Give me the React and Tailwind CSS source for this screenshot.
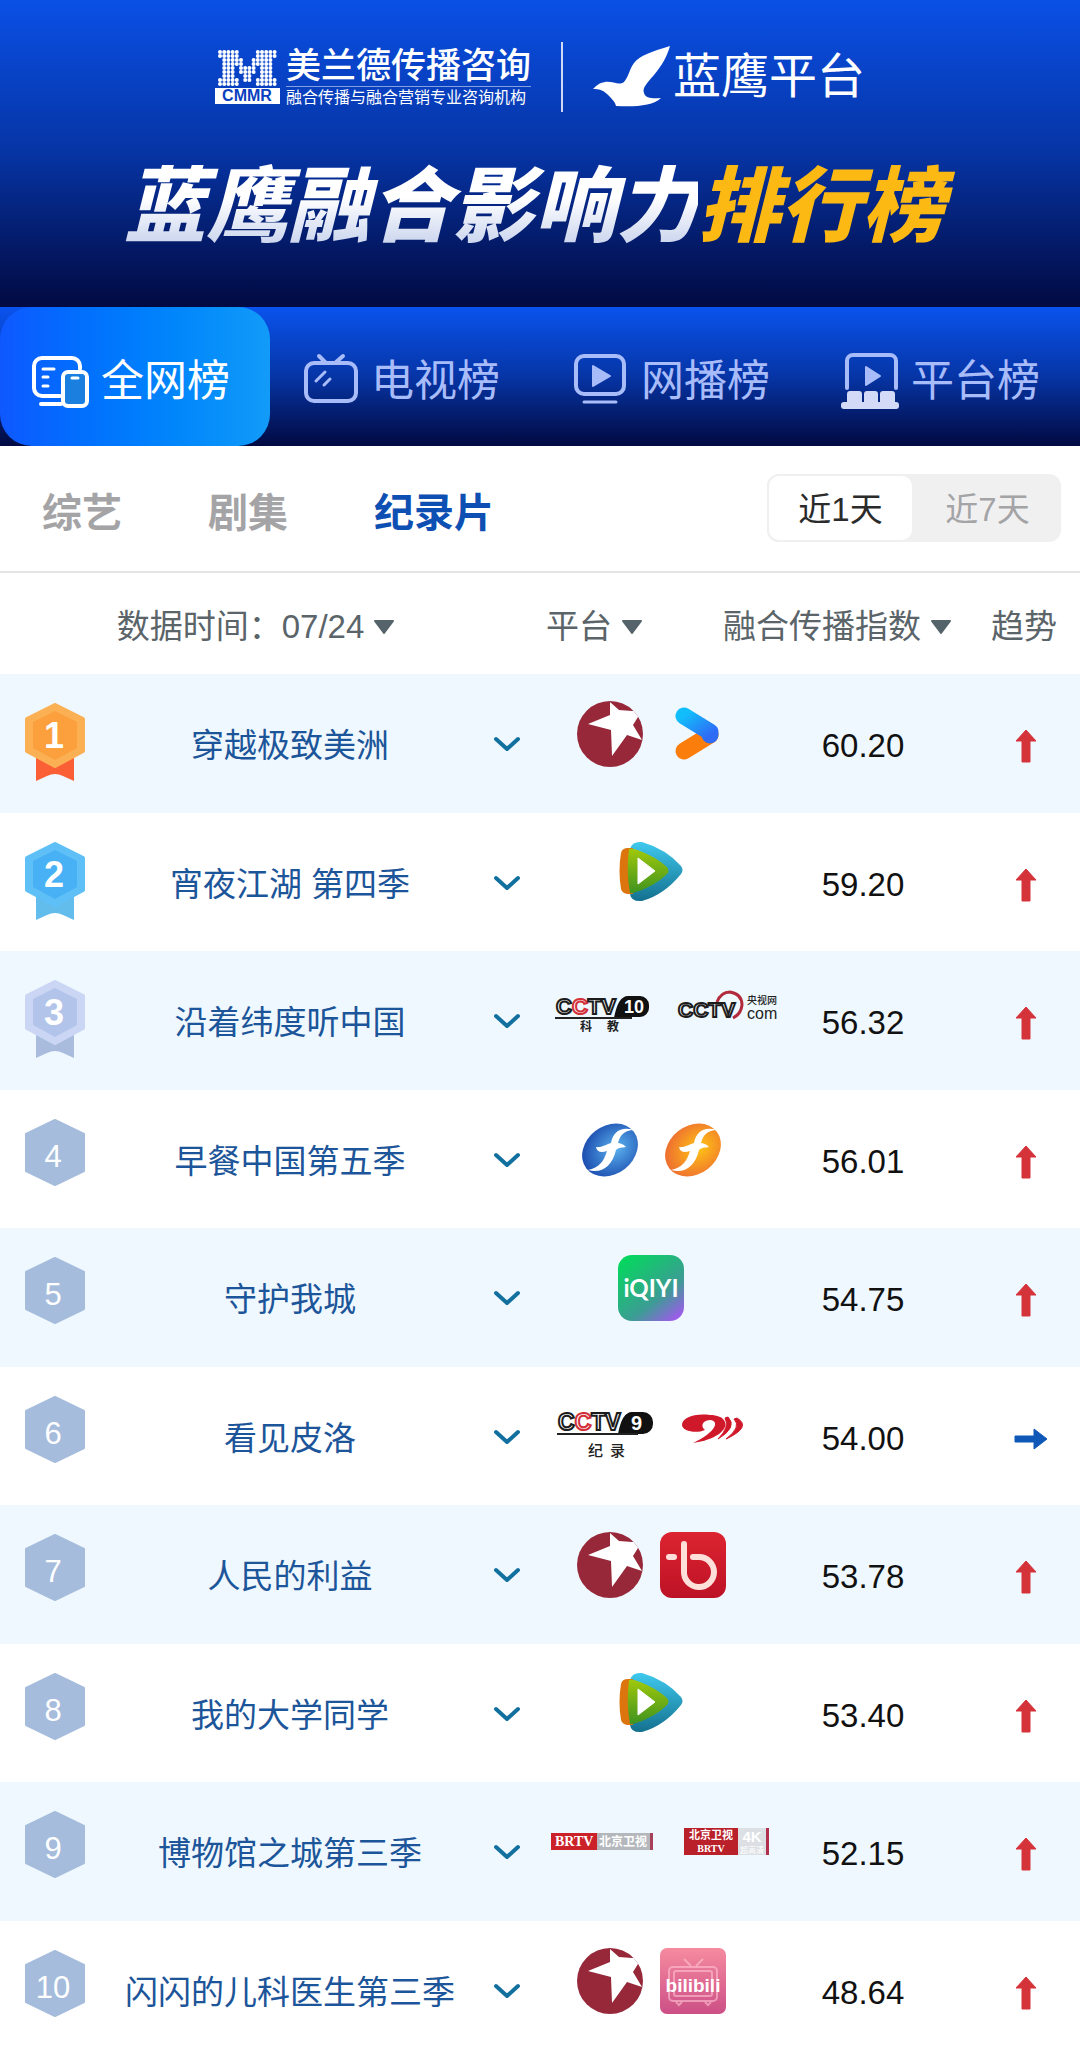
import { useState } from "react";

/* ===== DATA ===== */
const rankTabs = [
  { id: "all", label: "全网榜", icon: AllIcon },
  { id: "tv", label: "电视榜", icon: TvIcon },
  { id: "web", label: "网播榜", icon: WebIcon },
  { id: "platform", label: "平台榜", icon: PlatformIcon },
];

const categories = ["综艺", "剧集", "纪录片"];
const periods = ["近1天", "近7天"];

const rows = [
  { rank: 1, name: "穿越极致美洲", logos: [DragonStar, Youku], score: "60.20", trend: "up" },
  { rank: 2, name: "宵夜江湖 第四季", logos: [TencentVideo], score: "59.20", trend: "up" },
  { rank: 3, name: "沿着纬度听中国", logos: [Cctv10, CctvCom], wide: true, score: "56.32", trend: "up" },
  { rank: 4, name: "早餐中国第五季", logos: [BlueBird, OrangeBird], score: "56.01", trend: "up" },
  { rank: 5, name: "守护我城", logos: [Iqiyi], score: "54.75", trend: "up" },
  { rank: 6, name: "看见皮洛", logos: [Cctv9, NineLogo], wide: true, score: "54.00", trend: "flat" },
  { rank: 7, name: "人民的利益", logos: [DragonStar, BesTv], score: "53.78", trend: "up" },
  { rank: 8, name: "我的大学同学", logos: [TencentVideo], score: "53.40", trend: "up" },
  { rank: 9, name: "博物馆之城第三季", logos: [Brtv, Brtv4k], wide: true, score: "52.15", trend: "up" },
  { rank: 10, name: "闪闪的儿科医生第三季", logos: [DragonStar, Bilibili], score: "48.64", trend: "up" },
];

/* ===== TAB ICONS ===== */
function AllIcon() {
  return (
    <svg width="60" height="60" fill="none" stroke="currentColor" strokeWidth="4" strokeLinecap="round">
      <path d="M50 17v-3a8 8 0 0 0-8-8H12a8 8 0 0 0-8 8v22a8 8 0 0 0 8 8h18M11 52h20" />
      <rect x="33" y="20" width="24" height="34" rx="5" fill="#1b7fe0" />
      <path d="M13 17h11M13 25h5M13 34h5M42 26h6" strokeWidth="3" />
    </svg>
  );
}

function TvIcon() {
  return (
    <svg width="60" height="60" fill="none" stroke="currentColor" strokeWidth="4" strokeLinecap="round">
      <rect x="6" y="11" width="50" height="38" rx="8" />
      <path d="M19 4l7 7M43 4l-8 7" />
      <path d="M25 20l-9 9M30 27l-6 6" strokeWidth="3" />
    </svg>
  );
}

function WebIcon() {
  return (
    <svg width="60" height="60" fill="none" stroke="currentColor" strokeWidth="4" strokeLinecap="round">
      <rect x="6" y="4" width="48" height="38" rx="8" />
      <path d="M14 50h32" strokeWidth="3" />
      <path d="M23 14v20l17-10z" fill="currentColor" strokeWidth="2" strokeLinejoin="round" />
    </svg>
  );
}

function PlatformIcon() {
  return (
    <svg width="60" height="60" fill="none" stroke="currentColor" strokeWidth="4" strokeLinecap="round">
      <path d="M7 36V9a6 6 0 0 1 6-6h37a6 6 0 0 1 6 6v27" />
      <path d="M26 15v18l14-9z" fill="currentColor" strokeWidth="2" strokeLinejoin="round" />
      <g fill="#d3daf7" stroke="none">
        <rect x="7" y="39" width="15" height="16" rx="3" />
        <rect x="24" y="39" width="14" height="16" rx="3" />
        <rect x="40" y="39" width="15" height="16" rx="3" />
        <rect x="1" y="50" width="58" height="7" rx="3" />
      </g>
    </svg>
  );
}

/* ===== BRAND ===== */
const dots = [
  "#####....#####",
  "#####....#####",
  ".#####..#####.",
  ".#####..#####.",
  ".###.####.###.",
  ".###.####.###.",
  ".###..##..###.",
  "#####.##.#####",
  "#####....#####",
];

function CmmrMark() {
  return (
    <svg width="65" height="54" fill="#fff" className="shrink-0 overflow-visible">
      {dots.map((line, y) =>
        line.split("").map((c, x) =>
          c === "#" ? <circle key={`${x}-${y}`} cx={5 + x * 4.2} cy={2 + y * 4} r="2" /> : null
        )
      )}
      <rect y="38" width="65" height="16" />
      <text x="32" y="51" textAnchor="middle" fontSize="16" fontWeight="700" fill="#0a3fc0" className="font-['Liberation_Sans',sans-serif]">
        CMMR
      </text>
    </svg>
  );
}

function EagleMark() {
  return (
    <svg width="78" height="62" fill="#fff" className="shrink-0">
      <path d="M77 0C60 5 46 10 41 17C36 24 36 30 31 36C26 40 20 35 12 36C6 37 3 40 0 43C6 43 10 44 14 48C20 54 22 56 23 60C42 61 60 60 68 52C60 53 52 52 51 47C49 42 54 37 61 29C70 18 74 10 77 0Z" />
    </svg>
  );
}

/* ===== PLATFORM LOGOS ===== */
function DragonStar() {
  return (
    <svg width="66" height="66">
      <clipPath id="starClip">
        <circle cx="33" cy="33" r="33" />
      </clipPath>
      <circle cx="33" cy="33" r="33" fill="#96283a" />
      <path
        d="M33 1L42 9L55 10L66 8L56 24L65 39L50 34L35 55L34 29L11 23L33 14Z"
        fill="#fff"
        clipPath="url(#starClip)"
      />
    </svg>
  );
}

function Youku() {
  return (
    <svg width="66" height="66" fill="none" strokeWidth="17" strokeLinecap="round" strokeLinejoin="round">
      <linearGradient id="youkuBlue" x1="0" y1="0" x2="1" y2="1">
        <stop offset="0" stopColor="#12bdfb" />
        <stop offset="1" stopColor="#2f6cf6" />
      </linearGradient>
      <path d="M24 50L50 34" stroke="#fb7d0c" />
      <path d="M24 15L50 31L50 34" stroke="url(#youkuBlue)" />
    </svg>
  );
}

function TencentVideo() {
  return (
    <svg width="66" height="66">
      <linearGradient id="txBlue" x1="0" y1="0" x2="0" y2="1">
        <stop offset="0" stopColor="#3fc9ee" />
        <stop offset="1" stopColor="#14708f" />
      </linearGradient>
      <linearGradient id="txGreen" x1="0" y1="0" x2="0" y2="1">
        <stop offset="0" stopColor="#a0c80c" />
        <stop offset="1" stopColor="#3f931f" />
      </linearGradient>
      <path d="M12 9Q14 1 24 2Q48 9 63 26Q66 30 63 34Q46 55 24 61Q13 62 12 54Z" fill="url(#txBlue)" />
      <path d="M3 13Q4 8 10 8H15V54H9Q4 53 3 49Q0 31 3 13Z" fill="#dc750d" />
      <path d="M11 9Q15 8 22 11Q38 17 49 27Q52 31 49 34Q36 47 15 53H12Q8 31 11 9Z" fill="url(#txGreen)" />
      <path d="M20 18L37 31L20 44Z" fill="#fff" stroke="#fff" strokeLinejoin="round" />
    </svg>
  );
}

function CctvWord({ x, y, size = 22, accent = "#d3303a" }) {
  return (
    <text
      x={x}
      y={y}
      fontSize={size}
      fontWeight="700"
      fill="#fff"
      stroke="#1c1c1c"
      strokeWidth="2"
      className="font-['Liberation_Sans',sans-serif]"
    >
      C<tspan stroke={accent}>C</tspan>TV
    </text>
  );
}

function Cctv10() {
  return (
    <svg width="104" height="66" className="overflow-visible">
      <CctvWord x="8" y="36" />
      <path d="M7 40H66Q70 18 80 18H92A9 9 0 0 1 101 27V30A9 9 0 0 1 92 39H66" fill="#111" />
      <path d="M7 40H84" stroke="#222" strokeWidth="2" />
      <text x="76" y="35" fontSize="18" fontWeight="700" fill="#fff" className="font-['Liberation_Sans',sans-serif]">10</text>
      <g fontSize="12" fontWeight="700" fill="#222">
        <text x="32" y="53">科</text>
        <text x="59" y="53">教</text>
      </g>
    </svg>
  );
}

function CctvCom() {
  return (
    <svg width="104" height="66" className="overflow-visible">
      <path d="M45 24Q49 14 58 14Q70 16 70 27Q69 36 61 40" fill="none" stroke="#b32a3c" strokeWidth="3" />
      <CctvWord x="6" y="39" size={21} accent="#1c1c1c" />
      <text x="75" y="26" fontSize="10" fontWeight="500" fill="#222">央视网</text>
      <text x="75" y="41" fontSize="16" fill="#222" className="font-['Liberation_Sans',sans-serif]">com</text>
    </svg>
  );
}

function BirdLogo({ from, to, id }) {
  return (
    <svg width="66" height="66">
      <radialGradient id={id} cx="0.6" cy="0.55" r="0.6">
        <stop offset="0" stopColor={from} />
        <stop offset="1" stopColor={to} />
      </radialGradient>
      <ellipse cx="33" cy="33" rx="30" ry="24" transform="rotate(-38 33 33)" fill={`url(#${id})`} />
      <path
        d="M57 13C45 9 36 14 34 26C30 27 24 31 19 30C20 35 24 36 30 34C27 44 22 51 11 53C24 57 35 50 39 33C42 30 45 31 49 30C46 27 43 26 41 26C43 18 48 13 57 13Z"
        fill="#fff"
      />
    </svg>
  );
}

function BlueBird() {
  return <BirdLogo id="birdBlue" from="#5bb2ef" to="#1d4fb0" />;
}

function OrangeBird() {
  return <BirdLogo id="birdOrange" from="#ffc414" to="#ee7030" />;
}

function Iqiyi() {
  return (
    <svg width="66" height="66">
      <linearGradient id="iqiyiBg" x1="0.2" y1="0" x2="1" y2="1">
        <stop offset="0" stopColor="#06d65f" />
        <stop offset="0.6" stopColor="#3c9c94" />
        <stop offset="1" stopColor="#b44dff" />
      </linearGradient>
      <rect width="66" height="66" rx="14" fill="url(#iqiyiBg)" />
      <text x="33" y="42" textAnchor="middle" fontSize="24" fontWeight="700" fill="#fff" className="font-[Lato,sans-serif]">iQIYI</text>
    </svg>
  );
}

function Cctv9() {
  return (
    <svg width="104" height="66" className="overflow-visible">
      <CctvWord x="10" y="36" size={23} />
      <path d="M10 40H70Q74 18 84 18H95A10 10 0 0 1 105 28V30A10 10 0 0 1 95 40H70" fill="#111" />
      <path d="M9 40H90" stroke="#222" strokeWidth="2" />
      <text x="83" y="36" fontSize="20" fontWeight="700" fill="#fff" className="font-['Liberation_Sans',sans-serif]">9</text>
      <g fontSize="15" fontWeight="500" fill="#222">
        <text x="40" y="62">纪</text>
        <text x="62" y="62">录</text>
      </g>
    </svg>
  );
}

function NineLogo() {
  return (
    <svg width="104" height="66">
      <path d="M38 21C22 19 10 24 10 31C10 37 24 40 33 36C29 33 29 27 38 26C48 27 44 38 21 49C43 46 56 36 53 28C51 23 45 21 38 21Z" fill="#d0182b" />
      <path d="M56 23Q66 33 46 45Q58 33 53 24ZM65 24Q80 33 54 45Q70 33 62 25Z" fill="#d0182b" stroke="#d0182b" strokeWidth="1" strokeLinejoin="round" />
    </svg>
  );
}

function BesTv() {
  return (
    <svg width="66" height="66">
      <linearGradient id="bestvBg" x1="0" y1="0" x2="0" y2="1">
        <stop offset="0" stopColor="#dc2430" />
        <stop offset="1" stopColor="#bd1226" />
      </linearGradient>
      <rect width="66" height="66" rx="12" fill="url(#bestvBg)" />
      <path d="M24 12V39A15 15 0 1 0 39 25H33M9 25H14" fill="none" stroke="#ffdfda" strokeWidth="6" strokeLinecap="round" />
    </svg>
  );
}

function Brtv() {
  return (
    <svg width="104" height="66" className="overflow-visible">
      <rect x="3" y="24" width="46" height="17" fill="#cb2128" />
      <rect x="49" y="24" width="53" height="17" fill="#b4b8bc" />
      <rect x="102" y="24" width="3" height="17" fill="#a8405a" />
      <text x="7" y="37" fontSize="14" fontWeight="700" fill="#fff" className="font-['Liberation_Serif',serif]">BRTV</text>
      <text x="51" y="37" fontSize="12" fontWeight="700" fill="#fff">北京卫视</text>
    </svg>
  );
}

function Brtv4k() {
  return (
    <svg width="104" height="66">
      <rect x="12" y="19" width="54" height="27" fill="#b9202a" />
      <rect x="66" y="19" width="28" height="27" fill="#dcdfe4" />
      <rect x="94" y="19" width="3" height="27" fill="#b0304c" />
      <text x="17" y="30" fontSize="11" fontWeight="700" fill="#fff">北京卫视</text>
      <text x="39" y="43" textAnchor="middle" fontSize="10" fontWeight="700" fill="#fff" className="font-['Liberation_Serif',serif]">BRTV</text>
      <text x="80" y="33" textAnchor="middle" fontSize="15" fontWeight="700" fill="#fff" className="font-['Liberation_Sans',sans-serif]">4K</text>
      <text x="80" y="44" textAnchor="middle" fontSize="8" fill="#fff">超高清</text>
    </svg>
  );
}

function Bilibili() {
  return (
    <svg width="66" height="66">
      <linearGradient id="biliBg" x1="0" y1="0" x2="0" y2="1">
        <stop offset="0" stopColor="#f68ba0" />
        <stop offset="1" stopColor="#cc4f86" />
      </linearGradient>
      <rect width="66" height="66" rx="7" fill="url(#biliBg)" />
      <g fill="none" stroke="#ffc3d3" strokeOpacity="0.6" strokeWidth="2">
        <rect x="9" y="19" width="48" height="34" rx="4" />
        <rect x="14" y="23" width="38" height="25" rx="2" />
        <path d="M24 11l7 7M43 11l-7 7M16 54l3 3 3-3M45 54l3 3 3-3" />
      </g>
      <text x="33" y="44" textAnchor="middle" fontSize="19" fontWeight="700" fill="#fff" className="font-['Liberation_Sans',sans-serif]">bilibili</text>
    </svg>
  );
}

/* ===== RANK BADGE ===== */
const medals = {
  1: { outer: "#fbb054", inner: "#fba03c", ribbon: "#fb5f35" },
  2: { outer: "#5fbff7", inner: "#48b1f5", ribbon: "#62bdec" },
  3: { outer: "#cbd6f5", inner: "#b2c4ea", ribbon: "#a9bcdd" },
};

function RankBadge({ rank }) {
  const medal = medals[rank];

  if (medal) {
    return (
      <svg width="60" height="78">
        <path d="M11 50H49V78L38 73Q30 69 22 73L11 78Z" fill={medal.ribbon} />
        <path d="M30 2L58 16V48L30 63L2 48V16Z" fill={medal.outer} stroke={medal.outer} strokeWidth="4" strokeLinejoin="round" />
        <path d="M30 8L52 19V45L30 57L8 45V19Z" fill={medal.inner} />
        <text x="29" y="45" textAnchor="middle" fontSize="36" fontWeight="700" fill="#fff" className="font-['Liberation_Sans',sans-serif]">
          {rank}
        </text>
      </svg>
    );
  }

  return (
    <svg width="60" height="67">
      <path d="M30 1L59 15V52L30 66L1 52V15Z" fill="#a5bcdc" stroke="#a5bcdc" strokeWidth="2" strokeLinejoin="round" />
      <text x="28" y="48" textAnchor="middle" fontSize="31" fill="#fff" className="font-['Liberation_Sans',sans-serif]">
        {rank}
      </text>
    </svg>
  );
}

function Trend({ type }) {
  if (type === "flat") {
    return (
      <svg width="34" height="22" role="img" aria-label="持平" fill="#0f58b8" className="ml-[10px]">
        <path d="M1 8H20V1L33 11L20 21V14H1Z" stroke="#0f58b8" strokeLinejoin="round" />
      </svg>
    );
  }
  return (
    <svg width="22" height="34" role="img" aria-label="上升" fill="#d5333a">
      <path d="M7 33V12H1L11 1L21 12H15V33Z" stroke="#d5333a" strokeLinejoin="round" />
    </svg>
  );
}

function Caret() {
  return (
    <svg width="22" height="14" className="ml-[9px] shrink-0" fill="#55636a">
      <path d="M2 1H20L11 13Z" stroke="#55636a" strokeWidth="2" strokeLinejoin="round" />
    </svg>
  );
}

export default function App() {
  const [tab, setTab] = useState("all");
  const [category, setCategory] = useState("纪录片");
  const [period, setPeriod] = useState("近1天");
  const [openRow, setOpenRow] = useState(null);

  return (
    <div className="min-h-screen w-full bg-white font-['Liberation_Sans','Noto_Sans_CJK_SC',sans-serif]">
      {/* ===== HEADER ===== */}
      <header className="bg-linear-to-b from-[#0a50e6] via-[#0634a4] to-[#020a42] pt-[42px] pb-11 text-white">
        <div className="flex h-[70px] items-center justify-center">
          <CmmrMark />
          <div className="ml-[6px]">
            <p className="text-[35px] leading-9 font-medium">美兰德传播咨询</p>
            <p className="mt-[2px] border-t border-white/50 pt-[2px] text-[16px] leading-[18px]">
              融合传播与融合营销专业咨询机构
            </p>
          </div>
          <div className="mx-[30px] h-full w-[2px] bg-white/80" />
          <EagleMark />
          <p className="ml-[2px] text-[48px] leading-[70px]">蓝鹰平台</p>
        </div>

        <h1 className="mt-[39px] pr-3 text-center text-[82px] leading-[112px] font-black whitespace-nowrap italic">
          <span className="bg-linear-to-b from-white from-40% to-[#ccd6ee] to-90% bg-clip-text text-transparent">
            蓝鹰融合影响力
          </span>
          <span className="text-[#fdb913]">排行榜</span>
        </h1>
      </header>

      {/* ===== RANK TABS ===== */}
      <nav className="grid h-[139px] grid-cols-4 bg-linear-to-b from-[#0a53ee] via-[#0635a6] to-[#020a42]">
        {rankTabs.map(({ id, label, icon: Icon }) => (
          <button
            key={id}
            onClick={() => setTab(id)}
            className={`flex items-center gap-[11px] pt-[10px] pl-[30px] text-[43px] whitespace-nowrap ${
              tab === id
                ? "rounded-[32px] bg-linear-to-r from-[#0f58ff] to-[#129bf8] text-white"
                : "text-[#a9bcfa]"
            }`}
          >
            <Icon />
            {label}
          </button>
        ))}
      </nav>

      {/* ===== FILTERS ===== */}
      <div className="flex h-[127px] items-center justify-between border-b-2 border-[#e4e4e6] pr-[19px] pb-[2px] pl-[42px]">
        <div className="flex gap-[86px] pt-[10px]">
          {categories.map((c) => (
            <button
              key={c}
              onClick={() => setCategory(c)}
              className={`text-[40px] leading-[60px] font-bold ${
                category === c ? "text-[#0d4fb2]" : "text-[#a4a4a6]"
              }`}
            >
              {c}
            </button>
          ))}
        </div>

        <div className="flex rounded-xl bg-[#f1f0f1]">
          {periods.map((p) => (
            <button
              key={p}
              onClick={() => setPeriod(p)}
              className={`h-[68px] w-[147px] rounded-xl pt-1 text-[33px] ${
                period === p
                  ? "border-2 border-[#f1f0f1] bg-white text-[#2b2b2b]"
                  : "text-[#a4a4a6]"
              }`}
            >
              {p}
            </button>
          ))}
        </div>
      </div>

      {/* ===== TABLE ===== */}
      <table className="w-full table-fixed border-collapse text-[33px] leading-[48px]">
        <colgroup>
          <col className="w-[110px]" />
          <col />
          <col className="w-[74px]" />
          <col className="w-[236px]" />
          <col className="w-[172px]" />
          <col className="w-[128px]" />
        </colgroup>
        <thead>
          <tr className="h-[101px] whitespace-nowrap text-[#5a6469]">
            <th colSpan={3} className="p-0 pt-[6px] pr-8 font-normal">
              <button className="inline-flex items-center">
                数据时间：07/24
                <Caret />
              </button>
            </th>
            <th className="p-0 pt-[6px] pl-[2px] text-left font-normal">
              <button className="flex items-center">
                平台
                <Caret />
              </button>
            </th>
            <th className="p-0 pt-[6px] font-normal">
              <div className="flex justify-end">
                <button className="flex items-center">
                  融合传播指数
                  <Caret />
                </button>
              </div>
            </th>
            <th className="p-0 pt-[6px] pl-4 font-normal">趋势</th>
          </tr>
        </thead>
        <tbody>
          {rows.map((row) => (
            <tr
              key={row.rank}
              className="h-[138px] align-top last:h-[130px] odd:h-[139px] odd:bg-[#eff8fe]"
            >
              <td className="p-0 pt-[29px] pl-[25px]">
                <RankBadge rank={row.rank} />
              </td>
              <td className="p-0 pt-12 text-center whitespace-nowrap text-[#1c5599]">{row.name}</td>
              <td className="p-0 pt-[46px]">
                <button
                  aria-label={`展开${row.name}`}
                  aria-expanded={openRow === row.rank}
                  onClick={() => setOpenRow(openRow === row.rank ? null : row.rank)}
                  className="flex h-12 w-full items-center justify-center"
                >
                  <svg width="26" height="16" fill="none" stroke="#12709f" strokeWidth="4" strokeLinecap="round" strokeLinejoin="round">
                    <path d="M2 3L13 13L24 3" />
                  </svg>
                </button>
              </td>
              <td className={row.wide ? "p-0 pt-[27px]" : "p-0 pt-[27px] pr-[22px]"}>
                <div className={`flex justify-center ${row.wide ? "gap-5" : "gap-[17px]"}`}>
                  {row.logos.map((Logo, i) => (
                    <Logo key={i} />
                  ))}
                </div>
              </td>
              <td className="p-0 pt-12 pr-[6px] text-center text-[#111]">{row.score}</td>
              <td className="p-0 pt-12 pl-5">
                <div className="flex h-12 items-center justify-center">
                  <Trend type={row.trend} />
                </div>
              </td>
            </tr>
          ))}
        </tbody>
      </table>
    </div>
  );
}
